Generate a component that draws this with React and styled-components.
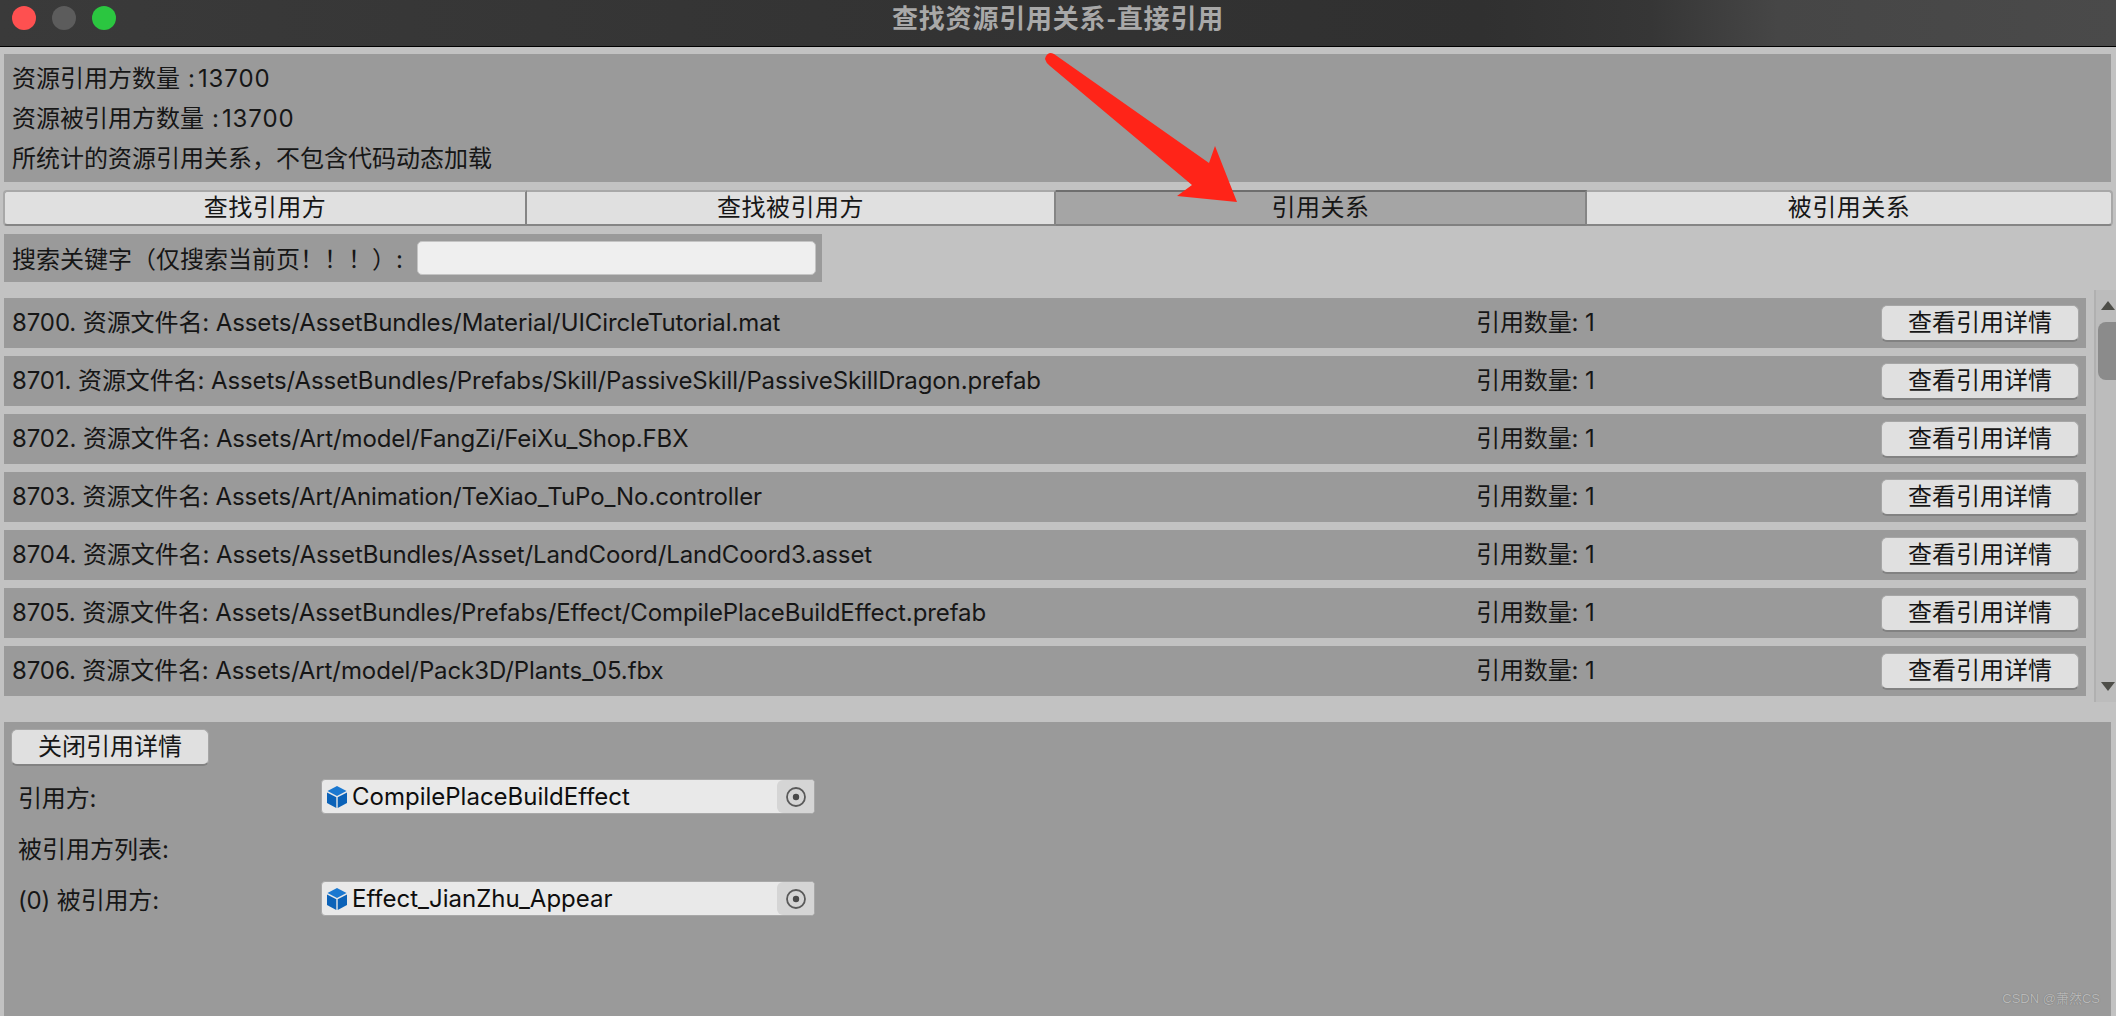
import React from 'react';
import styled, { createGlobalStyle } from 'styled-components';

const rows = [
  ['8700', 'Assets/AssetBundles/Material/UICircleTutorial.mat'],
  ['8701', 'Assets/AssetBundles/Prefabs/Skill/PassiveSkill/PassiveSkillDragon.prefab'],
  ['8702', 'Assets/Art/model/FangZi/FeiXu_Shop.FBX'],
  ['8703', 'Assets/Art/Animation/TeXiao_TuPo_No.controller'],
  ['8704', 'Assets/AssetBundles/Asset/LandCoord/LandCoord3.asset'],
  ['8705', 'Assets/AssetBundles/Prefabs/Effect/CompilePlaceBuildEffect.prefab'],
  ['8706', 'Assets/Art/model/Pack3D/Plants_05.fbx'],
];

const tabs = ['查找引用方', '查找被引用方', '引用关系', '被引用关系'];

function CubeIcon() {
  return (
    <Cube viewBox="0 0 20 22">
      <path d="M10 0 L19.5 5 L10 10 L0.5 5 Z" fill="#1b78d0" />
      <path d="M0 6.4 L9.3 11.3 V22 L0 17 Z" fill="#0b62b8" />
      <path d="M20 6.4 L10.7 11.3 V22 L20 17 Z" fill="#0b62b8" />
    </Cube>
  );
}

function TargetIcon() {
  return (
    <svg width="20" height="20" viewBox="0 0 20 20">
      <circle cx="10" cy="10" r="9" fill="none" stroke="#5a5a5a" strokeWidth="1.8" />
      <circle cx="10" cy="10" r="3.2" fill="#4a4a4a" />
    </svg>
  );
}

function ObjectField({ name }) {
  return (
    <Field>
      <CubeIcon />
      <FieldName>{name}</FieldName>
      <FieldTarget>
        <TargetIcon />
      </FieldTarget>
    </Field>
  );
}

function App() {
  return (
    <Window>
      <GlobalStyle />
      <TitleBar>
        <Lights>
          <Light $color="#fe5050" />
          <Light $color="#5c5c5c" />
          <Light $color="#2bc640" />
        </Lights>
        <Title>查找资源引用关系-直接引用</Title>
      </TitleBar>

      <InfoPanel>
        <InfoLine>资源引用方数量<Colon>:</Colon><Count>13700</Count></InfoLine>
        <InfoLine>资源被引用方数量<Colon>:</Colon><Count>13700</Count></InfoLine>
        <InfoLine>所统计的资源引用关系，不包含代码动态加载</InfoLine>
      </InfoPanel>

      <TabBar>
        {tabs.map((tab, i) => (
          <Tab key={tab} $active={i === 2}>{tab}</Tab>
        ))}
      </TabBar>

      <SearchPanel>
        <SearchLabel>搜索关键字（仅搜索当前页！！！）:</SearchLabel>
        <SearchInput />
      </SearchPanel>

      <ListArea>
        <List>
          {rows.map(([id, path]) => (
            <Row key={id}>
              <RowText>{id}. 资源文件名: {path}</RowText>
              <RowText>引用数量: 1</RowText>
              <Button>查看引用详情</Button>
            </Row>
          ))}
        </List>
        <ScrollBar>
          <ArrowUp />
          <Thumb />
          <ArrowDown />
        </ScrollBar>
      </ListArea>

      <DetailPanel>
        <CloseButton>关闭引用详情</CloseButton>
        <DetailRow>
          <Label>引用方:</Label>
          <ObjectField name="CompilePlaceBuildEffect" />
        </DetailRow>
        <ListTitle>被引用方列表:</ListTitle>
        <DetailRow>
          <Label>(0) 被引用方:</Label>
          <ObjectField name="Effect_JianZhu_Appear" />
        </DetailRow>
        <Watermark>CSDN @萧然CS</Watermark>
      </DetailPanel>

      <RedArrow viewBox="0 0 2116 1016">
        <path
          d="M1050 53 Q1046 54 1045 59 Q1046 63 1050 66 L1192 185 L1177 196 L1237 202 L1215 146 L1209 163 L1054 54 Q1052 53 1050 53 Z"
          fill="#ff2418"
        />
      </RedArrow>
    </Window>
  );
}

export default App;

const GlobalStyle = createGlobalStyle`
  html, body {
    margin: 0;
    padding: 0;
    background: #c2c2c2;
  }
  * {
    box-sizing: border-box;
  }
`;

const Window = styled.div`
  position: relative;
  width: 2116px;
  height: 1016px;
  overflow: hidden;
  display: flex;
  flex-direction: column;
  background: #c2c2c2;
  color: #161616;
  font-family: Inter, "Noto Sans CJK SC", sans-serif;
  font-size: 24px;
`;

const TitleBar = styled.div`
  height: 47px;
  flex: none;
  display: flex;
  align-items: flex-start;
  position: relative;
  justify-content: center;
  background: linear-gradient(90deg, #3a3a3a 0%, #333 45%, #303030 70%, #363636 78%, #464646 84%, #4a4a4a 100%);
  border-bottom: 1px solid #000;
`;

const Lights = styled.div`
  position: absolute;
  left: 12px;
  top: 6px;
  display: flex;
  gap: 16px;
`;

const Light = styled.div`
  width: 24px;
  height: 24px;
  border-radius: 50%;
  background: ${(p) => p.$color};
`;

const Title = styled.div`
  font-family: "Noto Sans CJK SC", sans-serif;
  font-size: 26px;
  line-height: 34px;
  font-weight: 700;
  letter-spacing: 0.8px;
  color: #a8a8a8;
`;

const InfoPanel = styled.div`
  margin: 7px 5px 0 4px;
  height: 128px;
  flex: none;
  padding: 5px 8px 0;
  background: #9a9a9a;
`;

const InfoLine = styled.div`
  height: 40px;
  line-height: 40px;
  overflow: hidden;
`;

const Colon = styled.span`
  margin: 0 3px 0 8px;
`;

const Count = styled.span`
  letter-spacing: 0.9px;
`;

const TabBar = styled.div`
  margin: 8px 3px 0 3px;
  height: 36px;
  flex: none;
  display: grid;
  grid-template-columns: 524px 529px 531px 1fr;
  grid-template-rows: 36px;
`;

const Tab = styled.div`
  display: flex;
  align-items: center;
  justify-content: center;
  line-height: 1;
  letter-spacing: 0.5px;
  background: ${(p) => (p.$active ? '#a5a5a5' : '#e0e0e0')};
  border-top: 2px solid ${(p) => (p.$active ? '#6e6e6e' : '#a8a8a8')};
  border-bottom: 2px solid ${(p) => (p.$active ? '#808080' : '#858585')};
  border-right: 2px solid #858585;

  &:first-child {
    border-left: 2px solid #a8a8a8;
    border-radius: 4px 0 0 4px;
  }
  &:last-child {
    border-right: 2px solid #a8a8a8;
    border-radius: 0 4px 4px 0;
  }
`;

const SearchPanel = styled.div`
  margin: 8px 0 0 4px;
  width: 818px;
  height: 48px;
  flex: none;
  display: flex;
  align-items: center;
  justify-content: space-between;
  padding: 0 6px 0 8px;
  background: #9a9a9a;
`;

const SearchLabel = styled.span`
  padding-bottom: 2px;
`;

const SearchInput = styled.div`
  width: 399px;
  height: 34px;
  border-radius: 5px;
  background: #efefef;
  border: 1px solid #c4c4c4;
`;

const ListArea = styled.div`
  margin: 8px 0 0 4px;
  height: 412px;
  flex: none;
  display: flex;
`;

const List = styled.div`
  width: 2082px;
  padding-top: 8px;
  display: flex;
  flex-direction: column;
  gap: 8px;
`;

const Row = styled.div`
  height: 50px;
  display: grid;
  grid-template-columns: 1464px 1fr auto;
  grid-template-rows: 50px;
  align-items: center;
  padding: 0 7px 0 8px;
  background: #9a9a9a;
`;

const RowText = styled.span`
  padding-bottom: 5px;
  letter-spacing: -0.1px;
`;

const Button = styled.div`
  width: 198px;
  height: 37px;
  display: flex;
  align-items: center;
  justify-content: center;
  line-height: 1;
  border-radius: 6px;
  background: #e0e0e0;
  border: 1px solid #a6a6a6;
  border-bottom: 2px solid #828282;
`;

const ScrollBar = styled.div`
  position: relative;
  margin-left: 8px;
  width: 22px;
  border-left: 2px solid #b0b0b0;
  background: #bcbcbc;
  display: flex;
  flex-direction: column;
  align-items: flex-end;
  justify-content: space-between;
`;

const ArrowUp = styled.div`
  margin: 11px 1px 0 0;
  width: 0;
  height: 0;
  border-left: 7px solid transparent;
  border-right: 7px solid transparent;
  border-bottom: 9px solid #4e4e49;
`;

const ArrowDown = styled.div`
  margin: 0 1px 11px 0;
  width: 0;
  height: 0;
  border-left: 7px solid transparent;
  border-right: 7px solid transparent;
  border-top: 9px solid #4e4e49;
`;

const Thumb = styled.div`
  position: absolute;
  top: 32px;
  right: 0;
  width: 18px;
  height: 58px;
  border-radius: 8px 0 0 8px;
  background: #8b8b8b;
`;

const DetailPanel = styled.div`
  position: relative;
  margin: 20px 5px 0 4px;
  flex: 1;
  padding: 7px 7px 0;
  background: #9a9a9a;
`;

const CloseButton = styled(Button)`
  width: 198px;
`;

const DetailRow = styled.div`
  margin-top: 13px;
  height: 35px;
  display: grid;
  grid-template-columns: 310px 494px;
  grid-template-rows: 35px;
  align-items: center;
`;

const Label = styled.span`
  padding-left: 7px;
  letter-spacing: -0.15px;
`;

const ListTitle = styled.div`
  margin-top: 19px;
  padding-left: 7px;
  height: 35px;
  line-height: 34px;
`;

const Field = styled.div`
  height: 35px;
  display: flex;
  align-items: center;
  padding-left: 5px;
  border-radius: 4px;
  background: #e9e9e9;
  border: 1px solid #a8a8a8;
  overflow: hidden;
`;

const Cube = styled.svg`
  width: 20px;
  height: 22px;
  flex: none;
`;

const FieldName = styled.span`
  margin-left: 5px;
  flex: 1;
  color: #0e0e0e;
`;

const FieldTarget = styled.div`
  width: 37px;
  height: 100%;
  display: flex;
  align-items: center;
  justify-content: center;
  background: #d5d5d5;
  border-radius: 6px 0 0 6px;
`;

const Watermark = styled.div`
  position: absolute;
  right: 11px;
  bottom: 9px;
  font-family: "Liberation Sans", "Noto Sans CJK SC", sans-serif;
  font-size: 13px;
  color: #b9b9b9;
  text-shadow: 0 0 1px #6a6a6a;
`;

const RedArrow = styled.svg`
  position: absolute;
  left: 0;
  top: 0;
  width: 2116px;
  height: 1016px;
  pointer-events: none;
`;
